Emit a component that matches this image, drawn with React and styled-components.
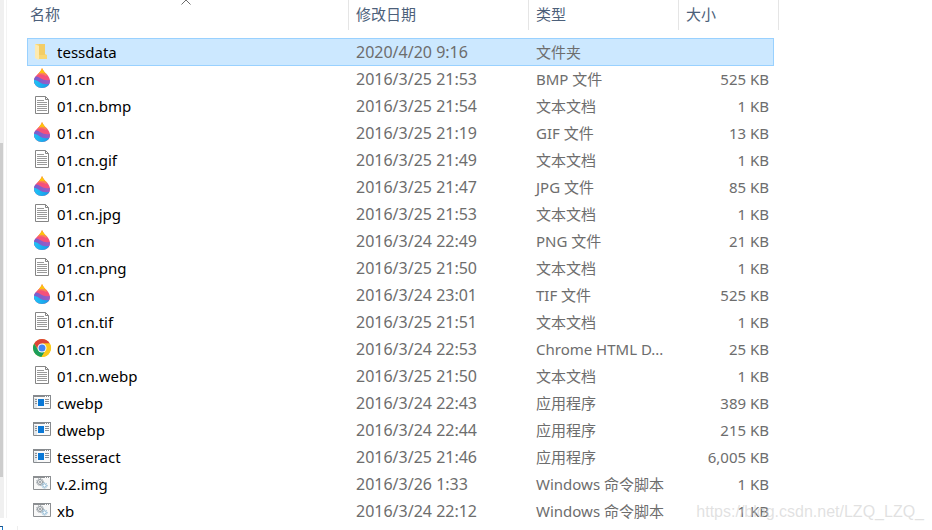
import styled, { createGlobalStyle } from 'styled-components'

const files = [
  { icon: 'folder', name: 'tessdata', date: '2020/4/20 9:16', type: '文件夹', size: '', selected: true },
  { icon: 'paint', name: '01.cn', date: '2016/3/25 21:53', type: 'BMP 文件', size: '525 KB' },
  { icon: 'text', name: '01.cn.bmp', date: '2016/3/25 21:54', type: '文本文档', size: '1 KB' },
  { icon: 'paint', name: '01.cn', date: '2016/3/25 21:19', type: 'GIF 文件', size: '13 KB' },
  { icon: 'text', name: '01.cn.gif', date: '2016/3/25 21:49', type: '文本文档', size: '1 KB' },
  { icon: 'paint', name: '01.cn', date: '2016/3/25 21:47', type: 'JPG 文件', size: '85 KB' },
  { icon: 'text', name: '01.cn.jpg', date: '2016/3/25 21:53', type: '文本文档', size: '1 KB' },
  { icon: 'paint', name: '01.cn', date: '2016/3/24 22:49', type: 'PNG 文件', size: '21 KB' },
  { icon: 'text', name: '01.cn.png', date: '2016/3/25 21:50', type: '文本文档', size: '1 KB' },
  { icon: 'paint', name: '01.cn', date: '2016/3/24 23:01', type: 'TIF 文件', size: '525 KB' },
  { icon: 'text', name: '01.cn.tif', date: '2016/3/25 21:51', type: '文本文档', size: '1 KB' },
  { icon: 'chrome', name: '01.cn', date: '2016/3/24 22:53', type: 'Chrome HTML D...', size: '25 KB' },
  { icon: 'text', name: '01.cn.webp', date: '2016/3/25 21:50', type: '文本文档', size: '1 KB' },
  { icon: 'app', name: 'cwebp', date: '2016/3/24 22:43', type: '应用程序', size: '389 KB' },
  { icon: 'app', name: 'dwebp', date: '2016/3/24 22:44', type: '应用程序', size: '215 KB' },
  { icon: 'app', name: 'tesseract', date: '2016/3/25 21:46', type: '应用程序', size: '6,005 KB' },
  { icon: 'script', name: 'v.2.img', date: '2016/3/26 1:33', type: 'Windows 命令脚本', size: '1 KB' },
  { icon: 'script', name: 'xb', date: '2016/3/24 22:12', type: 'Windows 命令脚本', size: '1 KB' },
]

const icons = {
  folder: (
    <>
      <path d="M3 3h10v10l2 1v4H5z" fill="#f8d775" />
      <path d="M7 3h6v11H7z" fill="#f3cd66" />
      <path d="M3 3l4 2v14l-4-2z" fill="#fdeab0" />
    </>
  ),
  paint: (
    <>
      <defs>
        <clipPath id="drop">
          <path d="M10 0C11.500 4.500 18 7.500 18 12.800C18 17 14.500 20 10 20S2 17 2 12.500C2 7.500 8.500 5.500 10 0z" />
        </clipPath>
        <linearGradient id="cyan" x1="0" y1="0" x2="1" y2="0">
          <stop offset="0" stopColor="#21c8f8" />
          <stop offset="1" stopColor="#1593e6" />
        </linearGradient>
        <linearGradient id="violet" x1="0" y1="0" x2="1" y2="0">
          <stop offset="0" stopColor="#6f5fd0" />
          <stop offset="1" stopColor="#a05cc4" />
        </linearGradient>
      </defs>
      <g clipPath="url(#drop)">
        <rect width="20" height="20" fill="#f5517c" />
        <path d="M6 0h8l2 7q-4-3-9-1z" fill="#fdc50a" />
        <path d="M6 5.500q5-2 9 1.500l-1 1q-4-3-9-1z" fill="#f98554" />
        <path d="M0 8.500q5-1 9 2t11 1v6H0z" fill="url(#violet)" />
        <path d="M0 11.500q5 0 8 3t12 1v5H0z" fill="url(#cyan)" />
      </g>
    </>
  ),
  text: (
    <>
      <path d="M3.500 1.500h10l3 3v14h-13z" fill="#fff" stroke="#858585" />
      <path d="M13.500 1.500v3h3" fill="none" stroke="#858585" />
      <path d="M5 5.500h7M5 7.500h10M5 9.500h10M5 11.500h10M5 13.500h10M5 15.500h10" stroke="#9a9a9a" />
    </>
  ),
  chrome: (
    <>
      <circle cx="10" cy="10" r="9" fill="#fbc91b" />
      <path d="M2.200 5.500A9 9 0 0 1 17.800 5.500L10 5.800L6.400 12z" fill="#dc4437" />
      <path d="M2.200 5.500A9 9 0 0 0 9.500 19L13.800 12.200L10 14.300L6.200 12.200z" fill="#1b9e5a" />
      <path d="M10 5.500H17.800A9 9 0 0 1 9.500 19L13.800 12z" fill="#fbc91b" />
      <circle cx="10" cy="10" r="4.500" fill="#fff" />
      <circle cx="10" cy="10" r="3.500" fill="#4285f4" />
    </>
  ),
  app: (
    <>
      <path d="M1.500 3.500h17v13h-17z" fill="#fafafa" stroke="#868a8e" />
      <path d="M1 4h18" stroke="#868a8e" strokeWidth="2" />
      <path d="M13 4.500h1M15 4.500h1M17 4.500h1" stroke="#fff" />
      <path d="M2 6h3v10H2z" fill="#e3e7ea" />
      <path d="M3 7.500h2M3 9.500h2M3 11.500h2M13 7.500h4M13 9.500h4M13 11.500h4" stroke="#8b9095" />
      <path d="M6 7h6v7H6z" fill="#0a78d6" />
    </>
  ),
  script: (
    <>
      <path d="M1.500 3.500h17v13h-17z" fill="#f8f8f8" stroke="#8c8f92" />
      <path d="M1 4h18" stroke="#8c8f92" strokeWidth="2" />
      <path d="M13 4.500h1M15 4.500h1M17 4.500h1" stroke="#fff" />
      <circle cx="8" cy="9" r="2.500" fill="#eee" stroke="#8d959b" />
      <circle cx="8" cy="9" r="3.500" fill="none" stroke="#8d959b" strokeDasharray="1 1" />
      <circle cx="8" cy="9" r="1" fill="#8d959b" />
      <circle cx="12.500" cy="12.500" r="1.700" fill="#fff" stroke="#86b4d2" />
      <circle cx="12.500" cy="12.500" r="2.700" fill="none" stroke="#86b4d2" strokeDasharray="1 1" />
    </>
  ),
}

function FileIcon({ kind }) {
  return <Icon viewBox="0 0 20 20" aria-hidden="true">{icons[kind]}</Icon>
}

function App() {
  return (
    <>
      <GlobalStyle />
      <Page>
        <Explorer>
          <ScrollTrack>
            <ScrollThumb />
          </ScrollTrack>
          <Listing>
            <SortMark viewBox="0 0 10 5" aria-hidden="true">
              <path d="M0.500 4.500L5 0L9.500 4.500" fill="none" stroke="#6d6d6d" />
            </SortMark>
            <Table>
              <colgroup>
                <Column $width={322} />
                <Column $width={180} />
                <Column $width={150} />
                <Column $width={95} />
                <Column $width={5} />
              </colgroup>
              <thead>
                <tr>
                  <Heading $first>名称</Heading>
                  <Heading>修改日期</Heading>
                  <Heading>类型</Heading>
                  <Heading colSpan={2}>大小</Heading>
                </tr>
                <Spacer />
              </thead>
              <tbody>
                {files.map((file, i) => (
                  <Row key={i} $selected={file.selected}>
                    <NameCell>
                      <FileName>
                        <FileIcon kind={file.icon} />
                        {file.name}
                      </FileName>
                    </NameCell>
                    <DateCell>{file.date}</DateCell>
                    <Cell>{file.type}</Cell>
                    <SizeCell>{file.size}</SizeCell>
                  </Row>
                ))}
              </tbody>
            </Table>
          </Listing>
        </Explorer>
        <BottomEdge>
          <Corner />
          <EdgeLine />
        </BottomEdge>
        <Watermark>https://blog.csdn.net/LZQ_LZQ_</Watermark>
      </Page>
    </>
  )
}

export default App


const GlobalStyle = createGlobalStyle`
  * {
    box-sizing: border-box;
  }

  body {
    margin: 0;
    background: #fff;
    font-family: 'Noto Sans', 'Noto Sans CJK SC', sans-serif;
    font-size: 15px;
  }
`;

const Page = styled.div`
  position: relative;
  display: flex;
  flex-direction: column;
  height: 100vh;
  overflow: hidden;
`;

const Explorer = styled.main`
  display: flex;
  flex: 1;
  gap: 2px;
  min-height: 0;
`;

const ScrollTrack = styled.div`
  display: flex;
  flex-direction: column;
  width: 4px;
  padding: 143px 1px 41px 0;
  background: #f0f0f0;
`;

const ScrollThumb = styled.div`
  flex: 1;
  background: #cdcdcd;
`;

const Listing = styled.div`
  position: relative;
  flex: 1;
  padding-left: 20px;
  border-left: 1px solid #f3f3f3;
`;

const SortMark = styled.svg`
  position: absolute;
  top: 0;
  left: 174px;
  width: 10px;
  height: 5px;
`;

const Table = styled.table`
  width: 752px;
  table-layout: fixed;
  border-collapse: separate;
  border-spacing: 0;
`;

const Column = styled.col`
  width: ${props => props.$width}px;
`;

const Heading = styled.th`
  height: 30px;
  padding: 0 0 3px ${props => (props.$first ? 3 : 7)}px;
  border-right: 1px solid #e5e5e5;
  color: #4c607a;
  font-weight: normal;
  line-height: 20px;
  text-align: left;
`;

const Spacer = styled.tr`
  height: 8px;
`;

const Cell = styled.td`
  height: 27px;
  padding: 0 0 2px 7px;
  color: #6d6d6d;
  line-height: 20px;
  white-space: nowrap;
`;

const NameCell = styled(Cell)`
  padding-left: 5px;
  color: #000;
`;

const DateCell = styled(Cell)`
  font-size: 16px;
`;

const SizeCell = styled(Cell)`
  padding-right: 5px;
  text-align: right;
`;

const Row = styled.tr`
  ${props => props.$selected && `
    ${Cell} {
      height: 28px;
      padding-bottom: 0;
      background: #cce8ff;
      border: solid #99d1ff;
      border-width: 1px 0;
    }

    ${Cell}:first-child {
      padding-left: 4px;
      border-left-width: 1px;
    }

    ${Cell}:last-child {
      border-right-width: 1px;
    }
  `}
`;

const FileName = styled.div`
  display: flex;
  align-items: center;
  gap: 5px;
`;

const Icon = styled.svg`
  width: 20px;
  height: 20px;
  margin-bottom: 2px;
`;

const BottomEdge = styled.div`
  display: flex;
  align-items: flex-end;
  gap: 14px;
  height: 12px;
`;

const Corner = styled.div`
  width: 3px;
  height: 4px;
  border-top: 1px solid #1d4f80;
  border-right: 1px solid #1979ca;
`;

const EdgeLine = styled.div`
  width: 1px;
  height: 4px;
  background: #eee;
`;

const Watermark = styled.div`
  position: absolute;
  right: 8px;
  bottom: 8px;
  color: rgba(205, 205, 205, 0.6);
  font-family: 'Liberation Sans', sans-serif;
  font-size: 16px;
  line-height: 20px;
`;
